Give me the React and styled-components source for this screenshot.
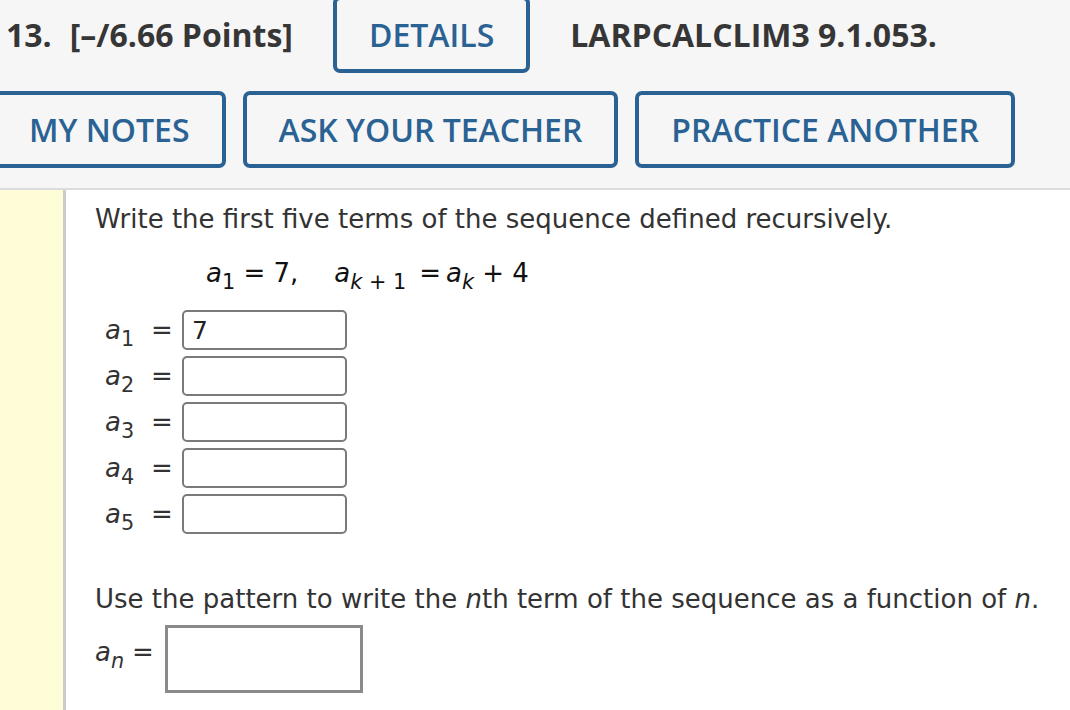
import styled, { createGlobalStyle } from 'styled-components';

const GlobalStyle = createGlobalStyle`
  html, body {
    margin: 0;
    padding: 0;
    background: #ffffff;
    overflow: hidden;
  }
`;

const Page = styled.div`
  width: 1070px;
  height: 710px;
  overflow: hidden;
  background: #fff;
`;

const Header = styled.header`
  background: #f6f6f6;
  border-bottom: 2px solid #dcdcdc;
  padding-bottom: 20px;
  font-family: 'Open Sans', 'Liberation Sans', sans-serif;
`;

const TitleRow = styled.div`
  display: flex;
  align-items: center;
  height: 77px;
  margin-top: -4px;
  padding-left: 6px;
`;

const Heading = styled.span`
  font-size: 32px;
  font-weight: 700;
  color: #363636;
  margin-right: ${(p) => p.$gap || 0}px;
`;

const ButtonRow = styled.div`
  display: flex;
  gap: 17px;
  margin-top: 18px;
  margin-left: -7px;
`;

const OutlineButton = styled.button`
  box-sizing: border-box;
  height: 77px;
  padding: 0 32px;
  border: 4px solid #2a6294;
  border-radius: 7px;
  background: transparent;
  color: #2a6294;
  font-family: 'Open Sans', 'Liberation Sans', sans-serif;
  font-size: 32px;
  font-weight: 600;
  white-space: nowrap;
  margin-right: ${(p) => p.$gap || 0}px;
`;

const Body = styled.div`
  display: flex;
  height: 520px;
`;

const Gutter = styled.div`
  width: 63px;
  flex: none;
  background: #fffcd8;
  border-right: 3px solid #cccccc;
`;

const Question = styled.main`
  flex: 1;
  padding: 14px 0 0 29px;
  font-family: 'DejaVu Sans', Verdana, sans-serif;
  font-size: 26px;
  color: #333;
`;

const Para = styled.p`
  margin: 0;
  line-height: 30px;
  margin-top: ${(p) => p.$top || 0}px;
`;

const Var = styled.i`
  font-style: italic;
`;

const Sub = styled.sub`
  font-size: 0.8em;
  font-style: ${(p) => (p.$italic ? 'italic' : 'normal')};
  vertical-align: -0.32em;
  line-height: 0;
`;

const Plain = styled.span`
  font-style: normal;
`;

const MathLine = styled.div`
  margin: 24px 0 0 111px;
  line-height: 30px;
  color: #111;
  white-space: pre;
`;

const Gap = styled.span`
  display: inline-block;
  width: ${(p) => p.$w}px;
`;

const Terms = styled.div`
  display: flex;
  flex-direction: column;
  gap: 6px;
  margin: 22px 0 0 10px;
`;

const TermRow = styled.div`
  display: flex;
  align-items: center;
  height: ${(p) => p.$h || 40}px;
`;

const Label = styled.span`
  width: ${(p) => p.$w}px;
  flex: none;
  line-height: 30px;
  padding-bottom: ${(p) => p.$lift || 0}px;
`;

const Eq = styled.span`
  width: ${(p) => p.$w}px;
  flex: none;
  line-height: 30px;
  padding-bottom: ${(p) => p.$lift || 0}px;
`;

const Field = styled.div`
  box-sizing: border-box;
  flex: none;
  width: ${(p) => p.$w}px;
  height: ${(p) => p.$h}px;
  border: ${(p) => (p.$square ? '3px solid #8a8a8a' : '2px solid #7a7a7a')};
  border-radius: ${(p) => (p.$square ? 0 : 5)}px;
  background: #fff;
  padding-left: 8px;
  display: flex;
  align-items: center;
  color: #222;
  font-size: 25px;
`;

const AnswerRow = styled(TermRow)`
  margin-top: 11px;
`;

const terms = ['7', '', '', '', ''];

export default function App() {
  return (
    <Page>
      <GlobalStyle />
      <Header>
        <TitleRow>
          <Heading $gap={18}>13.</Heading>
          <Heading $gap={40}>[–/6.66 Points]</Heading>
          <OutlineButton $gap={40}>DETAILS</OutlineButton>
          <Heading>LARPCALCLIM3 9.1.053.</Heading>
        </TitleRow>
        <ButtonRow>
          <OutlineButton>MY NOTES</OutlineButton>
          <OutlineButton>ASK YOUR TEACHER</OutlineButton>
          <OutlineButton>PRACTICE ANOTHER</OutlineButton>
        </ButtonRow>
      </Header>
      <Body>
        <Gutter />
        <Question>
          <Para>Write the first five terms of the sequence defined recursively.</Para>
          <MathLine>
            <Var>a</Var>
            <Sub>1</Sub>
            {' = 7,'}
            <Gap $w={36} />
            <Var>a</Var>
            <Sub $italic>
              k<Plain> + 1</Plain>
            </Sub>
            <Gap $w={13} />
            {'='}
            <Gap $w={5} />
            <Var>a</Var>
            <Sub $italic>k</Sub>
            {' + 4'}
          </MathLine>
          <Terms>
            {terms.map((t, i) => (
              <TermRow key={i}>
                <Label $w={46}>
                  <Var>a</Var>
                  <Sub>{i + 1}</Sub>
                </Label>
                <Eq $w={31}>=</Eq>
                <Field $w={165} $h={40}>{t}</Field>
              </TermRow>
            ))}
          </Terms>
          <Para $top={50}>
            Use the pattern to write the <Var>n</Var>th term of the sequence as a function of <Var>n</Var>.
          </Para>
          <AnswerRow $h={68}>
            <Label $w={37} $lift={14}>
              <Var>a</Var>
              <Sub $italic>n</Sub>
            </Label>
            <Eq $w={33} $lift={14}>=</Eq>
            <Field $w={198} $h={68} $square />
          </AnswerRow>
        </Question>
      </Body>
    </Page>
  );
}
